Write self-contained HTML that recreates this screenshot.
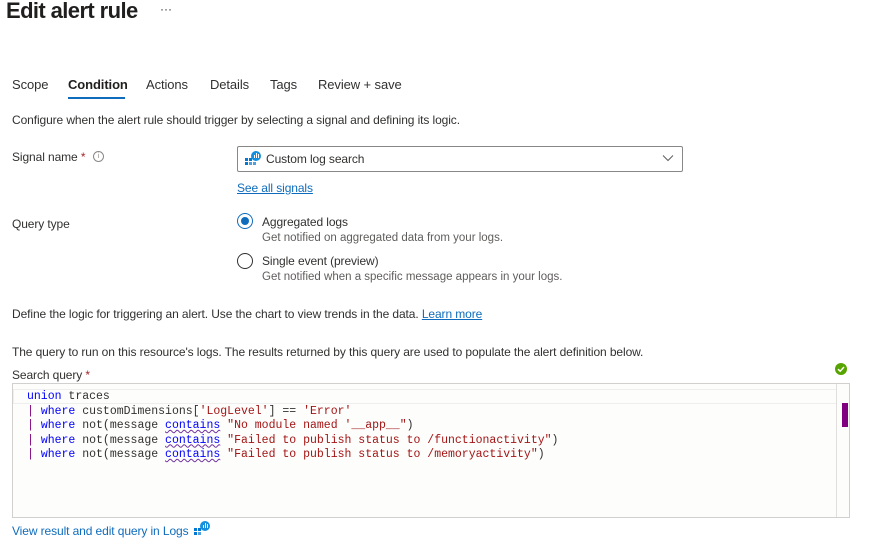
<!DOCTYPE html>
<html><head><meta charset="utf-8"><style>
body{margin:0;width:891px;height:550px;background:#fff;font-family:"Liberation Sans",sans-serif;color:#323130;position:relative;overflow:hidden}
.a{position:absolute;white-space:nowrap}
.t{font-size:12px;letter-spacing:-0.1px}
.s{font-size:11.5px;color:#605e5c;letter-spacing:0}
a,.lnk{color:#0f6cbd;text-decoration:underline}
.code{font-family:"Liberation Mono",monospace;font-size:11.5px;line-height:14.5px}
.kw{color:#0000ff}.st{color:#a31515}.bar{color:#800080}
.sq{text-decoration:underline wavy #7030a0;text-decoration-thickness:1px}
</style></head><body>
<div class="a" style="left:6px;top:-2px;font-size:22px;font-weight:bold;color:#201f1e;letter-spacing:-0.6px">Edit alert rule</div>
<div class="a" style="left:160px;top:2px;font-size:12px">···</div>

<div class="a t" style="left:12px;top:77px;font-size:13px">Scope</div>
<div class="a t" style="left:68px;top:77px;font-size:13px;font-weight:bold;color:#201f1e">Condition</div>
<div class="a" style="left:68px;top:97px;width:57px;height:2px;background:#0f6cbd"></div>
<div class="a t" style="left:146px;top:77px;font-size:13px">Actions</div>
<div class="a t" style="left:210px;top:77px;font-size:13px">Details</div>
<div class="a t" style="left:270px;top:77px;font-size:13px">Tags</div>
<div class="a t" style="left:318px;top:77px;font-size:13px">Review + save</div>

<div class="a t" style="left:12px;top:113px">Configure when the alert rule should trigger by selecting a signal and defining its logic.</div>

<div class="a t" style="left:12px;top:150px">Signal name <span style="color:#a4262c">*</span></div>
<div class="a" style="left:93px;top:151px;width:9px;height:9px;border:1px solid #8a8886;border-radius:50%;font-size:7px;text-align:center;line-height:9px;color:#8a8886">i</div>
<div class="a" style="left:237px;top:146px;width:444px;height:24px;border:1px solid #8a8886;border-radius:2px"></div>
<svg class="a" style="left:245px;top:151px" width="16" height="14" viewBox="0 0 16 14">
<rect x="0" y="7" width="3" height="3" fill="#0078d4"/><rect x="4" y="7" width="3" height="3" fill="#0078d4"/><rect x="0" y="11" width="3" height="3" fill="#0078d4"/><rect x="4" y="11" width="3" height="3" fill="#50a0e0"/><rect x="8" y="11" width="3" height="3" fill="#50a0e0"/>
<circle cx="11" cy="5" r="5" fill="#1490df"/><rect x="9" y="4" width="1" height="3" fill="#fff"/><rect x="11" y="2" width="1" height="5" fill="#fff"/><rect x="13" y="3" width="1" height="4" fill="#fff"/></svg>
<div class="a t" style="left:266px;top:152px">Custom log search</div>
<svg class="a" style="left:662px;top:154px" width="12" height="8"><path d="M1 1.5L6 6.5L11 1.5" stroke="#605e5c" fill="none" stroke-width="1"/></svg>
<div class="a t lnk" style="left:237px;top:181px">See all signals</div>

<div class="a t" style="left:12px;top:217px">Query type</div>
<div class="a" style="left:237px;top:213px;width:14px;height:14px;border:1.3px solid #0f6cbd;border-radius:50%"></div>
<div class="a" style="left:241px;top:217px;width:8px;height:8px;background:#0f6cbd;border-radius:50%"></div>
<div class="a t" style="left:262px;top:215px">Aggregated logs</div>
<div class="a s" style="left:262px;top:232px">Get notified on aggregated data from your logs.</div>
<div class="a" style="left:237px;top:253px;width:14px;height:14px;border:1.3px solid #323130;border-radius:50%"></div>
<div class="a t" style="left:262px;top:254px">Single event (preview)</div>
<div class="a s" style="left:262px;top:271px">Get notified when a specific message appears in your logs.</div>

<div class="a t" style="left:12px;top:307px">Define the logic for triggering an alert. Use the chart to view trends in the data. <span class="lnk">Learn more</span></div>
<div class="a t" style="left:12px;top:345px">The query to run on this resource's logs. The results returned by this query are used to populate the alert definition below.</div>
<div class="a t" style="left:12px;top:368px">Search query <span style="color:#a4262c">*</span></div>
<svg class="a" style="left:835px;top:363px" width="12" height="12"><circle cx="6" cy="6" r="6" fill="#57a300"/><path d="M3 6.2L5.2 8.2L9 4" stroke="#fff" stroke-width="1.5" fill="none"/></svg>

<div class="a" style="left:12px;top:383px;width:836px;height:133px;border:1px solid #d2d0ce;background:#fdfdfc"></div>
<div class="a" style="left:13px;top:389px;width:822px;height:13px;border:1px solid #eeeeee"></div>
<div class="a" style="left:836px;top:384px;width:1px;height:133px;background:#e1dfdd"></div>
<div class="a" style="left:842px;top:403px;width:6px;height:24px;background:#800080"></div>
<div class="a code" style="left:27px;top:390px"><span class="kw">union</span> traces<br>
<span class="bar">|</span> <span class="kw">where</span> customDimensions[<span class="st">'LogLevel'</span>] == <span class="st">'Error'</span><br>
<span class="bar">|</span> <span class="kw">where</span> not(message <span class="kw sq">contains</span> <span class="st">"No module named '__app__"</span>)<br>
<span class="bar">|</span> <span class="kw">where</span> not(message <span class="kw sq">contains</span> <span class="st">"Failed to publish status to /functionactivity"</span>)<br>
<span class="bar">|</span> <span class="kw">where</span> not(message <span class="kw sq">contains</span> <span class="st">"Failed to publish status to /memoryactivity"</span>)</div>

<div class="a t" style="left:12px;top:524px;color:#0f6cbd">View result and edit query in Logs</div>
<svg class="a" style="left:194px;top:521px" width="16" height="14" viewBox="0 0 16 14">
<rect x="0" y="7" width="3" height="3" fill="#0078d4"/><rect x="4" y="7" width="3" height="3" fill="#0078d4"/><rect x="0" y="11" width="3" height="3" fill="#0078d4"/><rect x="4" y="11" width="3" height="3" fill="#50a0e0"/>
<circle cx="11" cy="5" r="5" fill="#1490df"/><rect x="9" y="4" width="1" height="3" fill="#fff"/><rect x="11" y="2" width="1" height="5" fill="#fff"/><rect x="13" y="3" width="1" height="4" fill="#fff"/></svg>
</body></html>
